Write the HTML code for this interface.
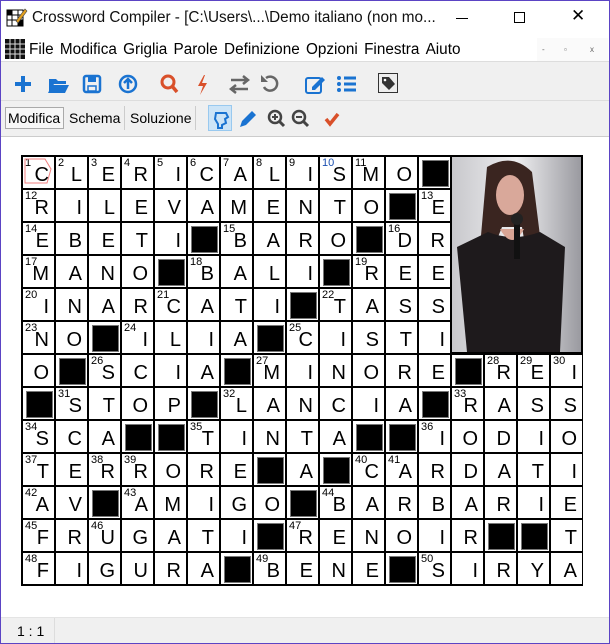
<!DOCTYPE html>
<html><head><meta charset="utf-8"><style>
*{margin:0;padding:0;box-sizing:border-box}
body{width:610px;height:644px;overflow:hidden;background:#fff;font-family:"Liberation Sans",sans-serif;position:relative}
.frame{position:absolute;left:0;top:0;width:610px;height:644px;border:1px solid #5b44c4;pointer-events:none;z-index:9}
.t{position:absolute;white-space:nowrap}
#grid{position:absolute;left:21px;top:155px;width:562px;height:431px;background:#000}
.c{position:absolute;width:31px;height:31px;background:#fff}
.c .l{position:absolute;right:5px;bottom:3px;font-size:20px;line-height:20px;color:#000}
.c .n{position:absolute;left:2px;top:0;font-size:11px;line-height:12px}
.c.b::after{content:"";position:absolute;left:3px;top:3px;width:25px;height:25px;background:#000;border:1px solid #777}
</style></head><body>
<div class="frame"></div>
<svg class="t" style="left:6px;top:7px" width="22" height="20"><rect x="1" y="3" width="16" height="16" fill="#fff" stroke="#000"/><path d="M1 8h16M1 13h16M6 3v16M12 3v16" stroke="#000"/><rect x="1" y="3" width="5" height="5" fill="#000"/><rect x="12" y="13" width="5" height="6" fill="#000"/><path d="M10 14l9-12 2 2-9 12z" fill="#e2a020" stroke="#444" stroke-width=".6"/></svg>
<div class="t" style="left:32px;top:9px;font-size:15.3px;color:#111">Crossword Compiler - [C:\Users\...\Demo italiano (non mo...</div>
<div class="t" style="left:456px;top:18px;width:12px;height:1px;background:#000"></div>
<div class="t" style="left:514px;top:12px;width:11px;height:11px;border:1px solid #000"></div>
<div class="t" style="left:571px;top:6px;font-size:17px">✕</div>
<svg class="t" style="left:5px;top:39px" width="20" height="20"><rect x="0" y="0" width="20" height="20" fill="#111"/><path d="M0 5h20M0 10h20M0 15h20M5 0v20M10 0v20M15 0v20" stroke="#ddd" stroke-width="1"/></svg>
<div class="t" style="left:29px;top:41px;font-size:15.3px;color:#000;word-spacing:2px">File&nbsp;Modifica&nbsp;Griglia&nbsp;Parole&nbsp;Definizione&nbsp;Opzioni&nbsp;Finestra&nbsp;Aiuto</div>
<div class="t" style="left:537px;top:38px;width:71px;height:24px;background:#fafafa;font-size:8px;color:#666"><span style="position:absolute;left:5px;top:7px">-</span><span style="position:absolute;left:27px;top:7px">▫</span><span style="position:absolute;left:53px;top:7px">x</span></div>
<div class="t" style="left:1px;top:61px;width:608px;height:76px;background:#f0f0f0;border-top:1px solid #ddd;border-bottom:1px solid #ccc"></div>
<div class="t" style="left:1px;top:100px;width:608px;height:1px;background:#ddd"></div>
<svg class="t" style="left:10px;top:72px" width="360" height="24">
<path d="M13 4v16M5 12h16" stroke="#1a73d1" stroke-width="4"/>
<path d="M39 7h7l2 2h8v3H44l-5 9z" fill="#1a73d1"/><path d="M42 13h17l-4 8H38z" fill="#1a73d1"/>
<rect x="74" y="4" width="16" height="16" rx="2" fill="none" stroke="#1a73d1" stroke-width="2.5"/><rect x="78" y="5" width="8" height="5" fill="#1a73d1"/><rect x="78" y="14" width="8" height="5" fill="none" stroke="#1a73d1" stroke-width="1.5"/>
<circle cx="118" cy="12" r="8" fill="none" stroke="#1a73d1" stroke-width="2.5"/><path d="M118 17V8M114 11l4-4 4 4" stroke="#1a73d1" stroke-width="2.5" fill="none"/>
<circle cx="158" cy="10" r="6" fill="none" stroke="#d9502a" stroke-width="3"/><path d="M162 14l5 6" stroke="#d9502a" stroke-width="3.5"/>
<path d="M194 3l-6 11h5l-3 9 7-12h-5l3-8z" fill="#d9502a"/>
<path d="M221 8h17M233 4l5 4-5 4M238 17h-17M226 13l-5 4 5 4" stroke="#666" stroke-width="2.5" fill="none"/>
<path d="M256 6a7 7 0 1 1-2 9" stroke="#666" stroke-width="2.5" fill="none"/><path d="M251 3v7h7z" fill="#666"/>
<rect x="296" y="6" width="15" height="15" rx="2" fill="none" stroke="#1a73d1" stroke-width="2"/><path d="M302 15l10-10 3 3-10 10h-3z" fill="#1a73d1"/>
<circle cx="329" cy="6" r="2" fill="#1a73d1"/><circle cx="329" cy="12" r="2" fill="#1a73d1"/><circle cx="329" cy="18" r="2" fill="#1a73d1"/><path d="M334 6h12M334 12h12M334 18h12" stroke="#1a73d1" stroke-width="3"/>
</svg>
<svg class="t" style="left:378px;top:73px" width="20" height="20"><rect x="0.5" y="0.5" width="19" height="19" fill="#eee" stroke="#333"/><path d="M4 4h7l6 7-6 6-7-7z" fill="#333"/><circle cx="7" cy="7" r="1.3" fill="#fff"/></svg>
<div class="t" style="left:5px;top:107px;width:59px;height:22px;border:1px solid #aaa;background:#f7f7f7"></div>
<div class="t" style="left:8px;top:110px;font-size:14px">Modifica</div>
<div class="t" style="left:69px;top:110px;font-size:14px">Schema</div>
<div class="t" style="left:124px;top:106px;width:1px;height:24px;background:#ccc"></div>
<div class="t" style="left:130px;top:110px;font-size:14px">Soluzione</div>
<div class="t" style="left:195px;top:106px;width:1px;height:24px;background:#ccc"></div>
<div class="t" style="left:208px;top:105px;width:24px;height:26px;background:#cce4f7;border:1px solid #99c9ef"></div>
<svg class="t" style="left:210px;top:107px" width="140" height="24">
<path d="M6 6h10l2 4-3 2 1 4-4 2v3H8v-4L5 12z" fill="none" stroke="#1a73d1" stroke-width="2"/>
<path d="M30 20l2-6 10-10 4 4-10 10z" fill="#1a73d1"/>
<circle cx="65" cy="10" r="6" fill="none" stroke="#444" stroke-width="2.5"/><path d="M69 14l5 5" stroke="#444" stroke-width="3"/><path d="M65 7v6M62 10h6" stroke="#444" stroke-width="2"/>
<circle cx="89" cy="10" r="6" fill="none" stroke="#444" stroke-width="2.5"/><path d="M93 14l5 5" stroke="#444" stroke-width="3"/><path d="M86 10h6" stroke="#444" stroke-width="2"/>
<path d="M116 12l4 5 8-10" stroke="#d9502a" stroke-width="3.5" fill="none"/>
</svg>
<div id="grid"></div>
<svg class="t" style="left:452px;top:157px" width="129" height="195">
<defs><linearGradient id="bg" x1="0" y1="0" x2="1" y2="0"><stop offset="0" stop-color="#c8c8cc"/><stop offset=".5" stop-color="#eeeef0"/><stop offset="1" stop-color="#9a9aa0"/></linearGradient></defs>
<rect width="129" height="195" fill="url(#bg)"/>
<path d="M35 10q25-15 45 5l10 80q-5 10-15 5l-5-30h-20l-10 25q-10 5-12-5z" fill="#3a2520"/>
<ellipse cx="58" cy="38" rx="14" ry="20" fill="#d9a89a"/>
<path d="M36 75q25 10 52 0l25 15-5 105H15l-10-105z" fill="#1e1a1c"/>
<path d="M48 72q12 22 24 0z" fill="#d8a494"/>
<rect x="62" y="62" width="6" height="40" fill="#111"/><circle cx="65" cy="62" r="6" fill="#222"/>
</svg>
<div class="t" style="left:1px;top:617px;width:608px;height:26px;background:#f0f0f0;border-top:1px solid #e4e4e4"></div>
<div class="t" style="left:54px;top:618px;width:1px;height:25px;background:#ddd"></div>
<div class="t" style="left:17px;top:623px;font-size:14px">1 : 1</div>
<script>
var rows=["CLERICALISMO#....","RILEVAMENTO#E....","EBETI#BARO#DR....","MANO#BALI#REE....","INARCATI#TASS....","NO#ILIA#CISTI....","O#SCIA#MINORE#REI","#STOP#LANCIA#RASS","SCA##TINTA##IODIO","TERRORE#A#CARDATI","AV#AMIGO#BARBARIE","FRUGATI#RENOIR##T","FIGURA#BENE#SIRYA"];
var nums={"0,0":1,"0,1":2,"0,2":3,"0,3":4,"0,4":5,"0,5":6,"0,6":7,"0,7":8,"0,8":9,"0,9":10,"0,10":11,"1,0":12,"1,12":13,"2,0":14,"2,6":15,"2,11":16,"3,0":17,"3,5":18,"3,10":19,"4,0":20,"4,4":21,"4,9":22,"5,0":23,"5,3":24,"5,8":25,"6,2":26,"6,7":27,"6,14":28,"6,15":29,"6,16":30,"7,1":31,"7,6":32,"7,13":33,"8,0":34,"8,5":35,"8,12":36,"9,0":37,"9,2":38,"9,3":39,"9,10":40,"9,11":41,"10,0":42,"10,3":43,"10,9":44,"11,0":45,"11,2":46,"11,8":47,"12,0":48,"12,7":49,"12,12":50};
var g=document.getElementById('grid'),h='';
for(var r=0;r<13;r++)for(var c=0;c<17;c++){var ch=rows[r][c];if(ch=='.')continue;
var x=2+c*33,y=2+r*33;
if(ch=='#'){h+='<div class="c b" style="left:'+x+'px;top:'+y+'px"></div>';continue;}
var n=nums[r+','+c];
h+='<div class="c" style="left:'+x+'px;top:'+y+'px">'+(n?'<span class="n"'+(n==10?' style="color:#1a4fb0"':'')+'>'+n+'</span>':'')+'<span class="l">'+ch+'</span></div>';}
g.innerHTML=h;
</script>
<svg class="t" style="left:23px;top:157px" width="31" height="31"><path d="M2 2h20l6 10-4 14H2z" fill="none" stroke="#f08080" stroke-width="1"/></svg>
</body></html>
